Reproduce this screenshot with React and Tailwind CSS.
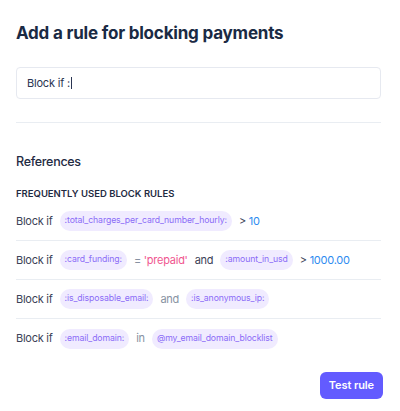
import React from "react";

const Pill = ({ children }) => (
  <span className="inline-flex h-[20px] items-center whitespace-nowrap rounded-full bg-[#f0ebff] px-[5px] text-[8.7px] tracking-[-0.1px] text-[#8b6cf7]">
    {children}
  </span>
);

const rules = [
  [
    <Pill key="a">:total_charges_per_card_number_hourly:</Pill>,
    <span key="b" className="text-[#3c4257]">&gt; <span className="text-[#2e8bf0]">10</span></span>,
  ],
  [
    <Pill key="a">:card_funding:</Pill>,
    <span key="b" className="text-[#8792a2]">= <span className="text-[#f0568f]">'prepaid'</span></span>,
    <span key="c" className="text-[#3c4257]">and</span>,
    <Pill key="d">:amount_in_usd</Pill>,
    <span key="e" className="text-[#3c4257]">&gt; <span className="text-[#2e8bf0]">1000.00</span></span>,
  ],
  [
    <Pill key="a">:is_disposable_email:</Pill>,
    <span key="b" className="text-[#8792a2]">and</span>,
    <Pill key="c">:is_anonymous_ip:</Pill>,
  ],
  [
    <Pill key="a">:email_domain:</Pill>,
    <span key="b" className="text-[#8792a2]">in</span>,
    <Pill key="c">@my_email_domain_blocklist</Pill>,
  ],
];

export default function App() {
  return (
    <div
      className="w-[400px] h-[411px] bg-white pl-4 pr-[19px] pt-[23px] text-[#1a2a44]"
      style={{ fontFamily: "Inter, 'Noto Sans', sans-serif" }}
    >
      <h1 className="text-[17px] font-bold leading-[21px] tracking-[-0.2px]">
        Add a rule for blocking payments
      </h1>

      <div className="mt-[23px] flex h-[32px] items-center rounded-[4px] border border-[#e6e9f0] px-[10px] text-[11px] tracking-[-0.2px] text-[#2a3552]">
        Block if :<span className="ml-[1px] inline-block h-[12px] w-px bg-[#2a3552]" />
      </div>

      <div className="mt-[23px] h-px bg-[#e9edf2]" />

      <h2 className="mt-[31px] text-[12.5px] font-medium leading-[16px] tracking-[-0.3px] text-[#1f2b43]">
        References
      </h2>

      <div className="mt-[18px] text-[9.5px] font-semibold uppercase leading-[12px] text-[#1f2b43]">
        Frequently used block rules
      </div>

      <div className="mt-[2px]">
        {rules.map((r, i) => (
          <div
            key={i}
            className={`flex h-[39px] items-center gap-[7px] whitespace-nowrap text-[11px] tracking-[-0.25px] ${i < rules.length - 1 ? "border-b border-[#e9edf2]" : ""}`}
          >
            <span className="text-[#3c4257]">Block if</span>
            {r}
          </div>
        ))}
      </div>

      <div className="mt-[14px] -mr-[2px] flex justify-end">
        <button className="h-[27px] rounded-[6px] bg-[#635bff] px-[9px] text-[11px] font-semibold tracking-[-0.1px] text-white">
          Test rule
        </button>
      </div>
    </div>
  );
}
